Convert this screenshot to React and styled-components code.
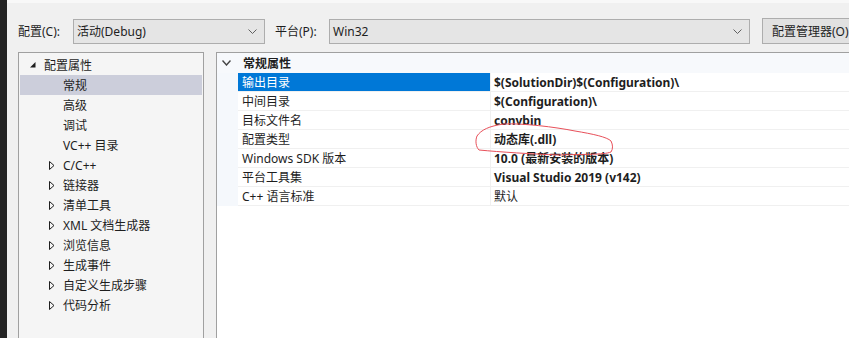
import React from 'react';
import styled, { createGlobalStyle } from 'styled-components';

const GlobalStyle = createGlobalStyle`
  html, body {
    margin: 0;
    padding: 0;
    background: #f0f0f0;
    overflow: hidden;
  }
  body {
    font-family: "Noto Sans", "Noto Sans CJK SC", sans-serif;
    font-size: 12px;
    color: #1e1e1e;
  }
`;

const Window = styled.div`
  display: flex;
  height: 338px;
  overflow: hidden;
`;

const DarkEdge = styled.div`
  width: 7px;
  flex-shrink: 0;
  background: #232323;
`;

const Main = styled.div`
  flex: 1;
  min-width: 0;
  display: flex;
  flex-direction: column;
  padding: 15px 0 0 11px;
  border-top: 3px solid #f8f8f8;
`;

const Toolbar = styled.div`
  display: flex;
  align-items: center;
  height: 26px;
`;

const Label = styled.span`
  width: ${p => p.w}px;
  margin-left: ${p => p.ml || 0}px;
  flex-shrink: 0;
  white-space: nowrap;
`;

const Select = styled.div`
  width: ${p => p.w}px;
  height: 25px;
  box-sizing: border-box;
  flex-shrink: 0;
  display: flex;
  align-items: center;
  justify-content: space-between;
  padding: 0 7px 0 3px;
  background: #e5e5e5;
  border: 1px solid #adadad;
`;

const Button = styled.div`
  width: 110px;
  height: 26px;
  box-sizing: border-box;
  flex-shrink: 0;
  margin-left: 12px;
  display: flex;
  align-items: center;
  padding-left: 9px;
  background: #e1e1e1;
  border: 1px solid #adadad;
  white-space: nowrap;
`;

const Content = styled.div`
  display: flex;
  gap: 12px;
  margin-top: 8px;
`;

const Tree = styled.div`
  width: 186px;
  height: 320px;
  box-sizing: border-box;
  flex-shrink: 0;
  padding: 2px 1px;
  background: #f5f5f5;
  border: 1px solid #a0a0a0;
`;

const TreeRow = styled.div`
  height: 20px;
  display: flex;
  align-items: center;
  padding-left: ${p => 10 + p.level * 19}px;
  background: ${p => (p.selected ? '#cccedb' : 'transparent')};
  white-space: nowrap;
`;

const Expander = styled.span`
  width: 14px;
  flex-shrink: 0;
  display: flex;
  align-items: center;
`;

const Grid = styled.div`
  position: relative;
  width: 700px;
  height: 320px;
  flex-shrink: 0;
  background: #fff;
  border-top: 1px solid #a0a0a0;
  border-left: 1px solid #a0a0a0;
`;

const GroupHeader = styled.div`
  height: 20px;
  display: flex;
  align-items: center;
  padding-left: 5px;
  background: #f7f9fc;
  font-weight: 700;
`;

const Chevron = styled.span`
  width: 21px;
  display: flex;
  align-items: center;
`;

const PropRow = styled.div`
  display: grid;
  grid-template-columns: 21px 252px 1fr;
  height: 19px;
`;

const Gutter = styled.div`
  background: #f5f8fc;
`;

const Cell = styled.div`
  display: flex;
  align-items: center;
  padding-left: ${p => (p.value ? 3 : 4)}px;
  border-bottom: 1px solid #f0f0f0;
  border-left: ${p => (p.value ? '1px solid #f0f0f0' : 'none')};
  background: ${p => (p.selected ? '#0078d7' : 'transparent')};
  color: ${p => (p.selected ? '#fff' : '#1e1e1e')};
  font-weight: ${p => (p.bold ? 700 : 400)};
  white-space: nowrap;
`;

const Scribble = styled.svg`
  position: absolute;
  left: 258px;
  top: 69px;
  overflow: visible;
`;

const DropArrow = () => (
  <svg width="9" height="5" viewBox="0 0 9 5">
    <polyline points="0.5,0.5 4.5,4.5 8.5,0.5" fill="none" stroke="#606060" strokeWidth="1" />
  </svg>
);

const treeItems = [
  { label: '配置属性', level: 0, open: true },
  { label: '常规', level: 1, selected: true },
  { label: '高级', level: 1 },
  { label: '调试', level: 1 },
  { label: 'VC++ 目录', level: 1 },
  { label: 'C/C++', level: 1, closed: true },
  { label: '链接器', level: 1, closed: true },
  { label: '清单工具', level: 1, closed: true },
  { label: 'XML 文档生成器', level: 1, closed: true },
  { label: '浏览信息', level: 1, closed: true },
  { label: '生成事件', level: 1, closed: true },
  { label: '自定义生成步骤', level: 1, closed: true },
  { label: '代码分析', level: 1, closed: true },
];

const props = [
  { name: '输出目录', value: '$(SolutionDir)$(Configuration)\\', bold: true, selected: true },
  { name: '中间目录', value: '$(Configuration)\\', bold: true },
  { name: '目标文件名', value: 'convbin', bold: true },
  { name: '配置类型', value: '动态库(.dll)', bold: true },
  { name: 'Windows SDK 版本', value: '10.0 (最新安装的版本)', bold: true },
  { name: '平台工具集', value: 'Visual Studio 2019 (v142)', bold: true },
  { name: 'C++ 语言标准', value: '默认' },
];

export default function App() {
  return (
    <>
      <GlobalStyle />
      <Window>
        <DarkEdge />
        <Main>
          <Toolbar>
            <Label w={55}>配置(C):</Label>
            <Select w={192}>
              <span>活动(Debug)</span>
              <DropArrow />
            </Select>
            <Label w={54} ml={10}>平台(P):</Label>
            <Select w={421}>
              <span>Win32</span>
              <DropArrow />
            </Select>
            <Button>配置管理器(O)</Button>
          </Toolbar>
          <Content>
            <Tree>
              {treeItems.map((item, i) => (
                <TreeRow key={i} level={item.level} selected={item.selected}>
                  <Expander>
                    {item.open && (
                      <svg width="6" height="6" viewBox="0 0 6 6">
                        <polygon points="5.5,0 5.5,5.5 0,5.5" fill="#1e1e1e" />
                      </svg>
                    )}
                    {item.closed && (
                      <svg width="6" height="9" viewBox="0 0 6 9">
                        <polygon points="0.5,0.5 5,4.5 0.5,8.5" fill="none" stroke="#1e1e1e" strokeWidth="1" />
                      </svg>
                    )}
                  </Expander>
                  {item.label}
                </TreeRow>
              ))}
            </Tree>
            <Grid>
              <GroupHeader>
                <Chevron>
                  <svg width="9" height="6" viewBox="0 0 9 6">
                    <polyline points="0.5,0.5 4.5,5 8.5,0.5" fill="none" stroke="#444" strokeWidth="1.4" />
                  </svg>
                </Chevron>
                常规属性
              </GroupHeader>
              {props.map((p, i) => (
                <PropRow key={i}>
                  <Gutter />
                  <Cell selected={p.selected}>{p.name}</Cell>
                  <Cell value bold={p.bold}>{p.value}</Cell>
                </PropRow>
              ))}
              <Scribble width="140" height="36" viewBox="0 0 140 36">
                <path
                  d="M2,14 C6,8 14,4 29,2 C47,1 80,5 100,9 C118,12 132,15 136,19 C138,23 138,27 136,30 C128,33 110,32 84,33 C56,32 25,30 4,28 C1,25 0,19 2,14"
                  fill="none"
                  stroke="#e8505a"
                  strokeWidth="1"
                />
              </Scribble>
            </Grid>
          </Content>
        </Main>
      </Window>
    </>
  );
}
